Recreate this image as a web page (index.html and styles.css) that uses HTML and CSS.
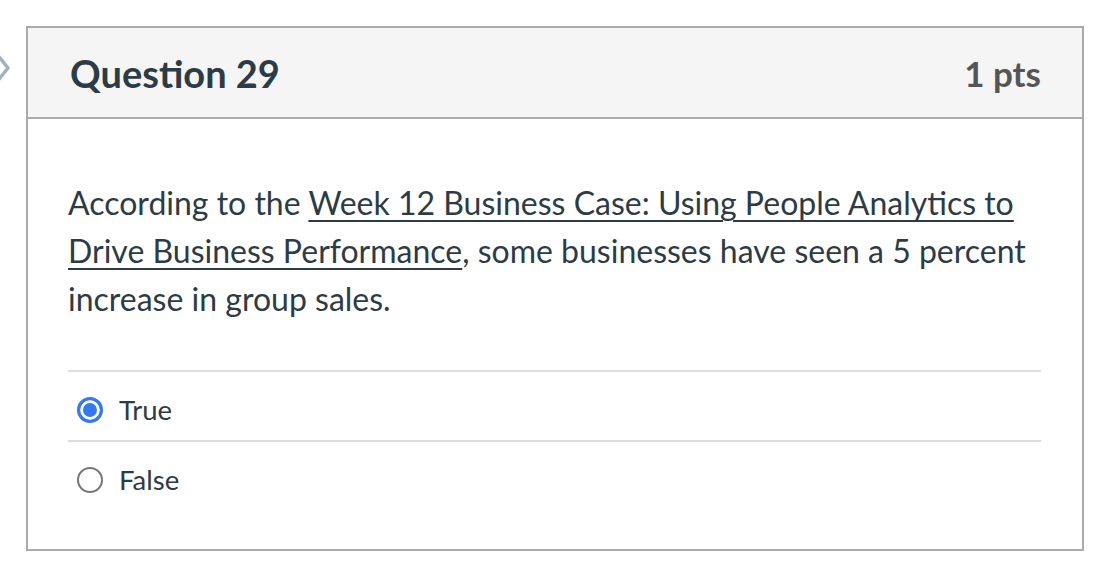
FILE: index.html
```html
<!DOCTYPE html>
<html>
<head>
<meta charset="utf-8">
<link rel="stylesheet" href="styles.css">
</head>
<body>
<svg class="flag" width="12" height="34" viewBox="0 0 12 34"><path d="M-4 2 L8 17 L-4 32" fill="none" stroke="#9fb3c4" stroke-width="3.5" stroke-linejoin="round"/></svg>
<div class="card">
  <div class="header">
    <h2 class="title">Question 29</h2>
    <span class="pts">1 pts</span>
  </div>
  <div class="body">
    <p class="question">According to the <a href="#">Week 12 Business Case: Using People Analytics to Drive Business Performance</a>, some businesses have seen a 5 percent increase in group sales.</p>
    <div class="answers">
      <label class="answer"><span class="radio checked"></span><span class="label">True</span></label>
      <label class="answer"><span class="radio"></span><span class="label">False</span></label>
    </div>
  </div>
</div>
</body>
</html>
```
FILE: styles.css
```css
html, body {
  margin: 0;
  padding: 0;
  background: #fff;
}
body {
  font-family: Lato, "Open Sans", sans-serif;
  color: #2d3b45;
  padding: 26px 0 0 26px;
  position: relative;
}
.flag {
  position: absolute;
  left: 0;
  top: 51px;
}
.card {
  width: 1054px;
  border: 2px solid #aaa;
}
.header {
  height: 89px;
  background: #f5f5f5;
  border-bottom: 2px solid #aaa;
  display: flex;
  align-items: center;
  justify-content: space-between;
  padding: 0 41px 0 42px;
}
.title {
  margin: 0;
  font-size: 38px;
  font-weight: 700;
  color: #2d3b45;
}
.pts {
  font-size: 35px;
  font-weight: 700;
  color: #555;
}
.body {
  padding: 60px 41px 39px 40px;
}
.question {
  margin: 0 0 47px;
  font-size: 32px;
  line-height: 48px;
}
.question a {
  color: #2d3b45;
  text-decoration: underline;
  text-underline-offset: 5px;
  text-decoration-thickness: 2px;
}
.answer {
  display: flex;
  align-items: center;
  height: 70px;
  box-sizing: border-box;
  padding: 8px 0 0 9px;
  border-top: 2px solid #ddd;
}
.radio {
  width: 26px;
  height: 26px;
  box-sizing: border-box;
  border-radius: 50%;
  border: 2px solid #767676;
  background: #fff;
  margin-right: 16px;
  flex: none;
}
.radio.checked {
  border: 3px solid #3478f6;
  box-shadow: inset 0 0 0 3px #fff;
  background: #3478f6;
}
.label {
  font-size: 27.5px;
  line-height: 28px;
}
```
